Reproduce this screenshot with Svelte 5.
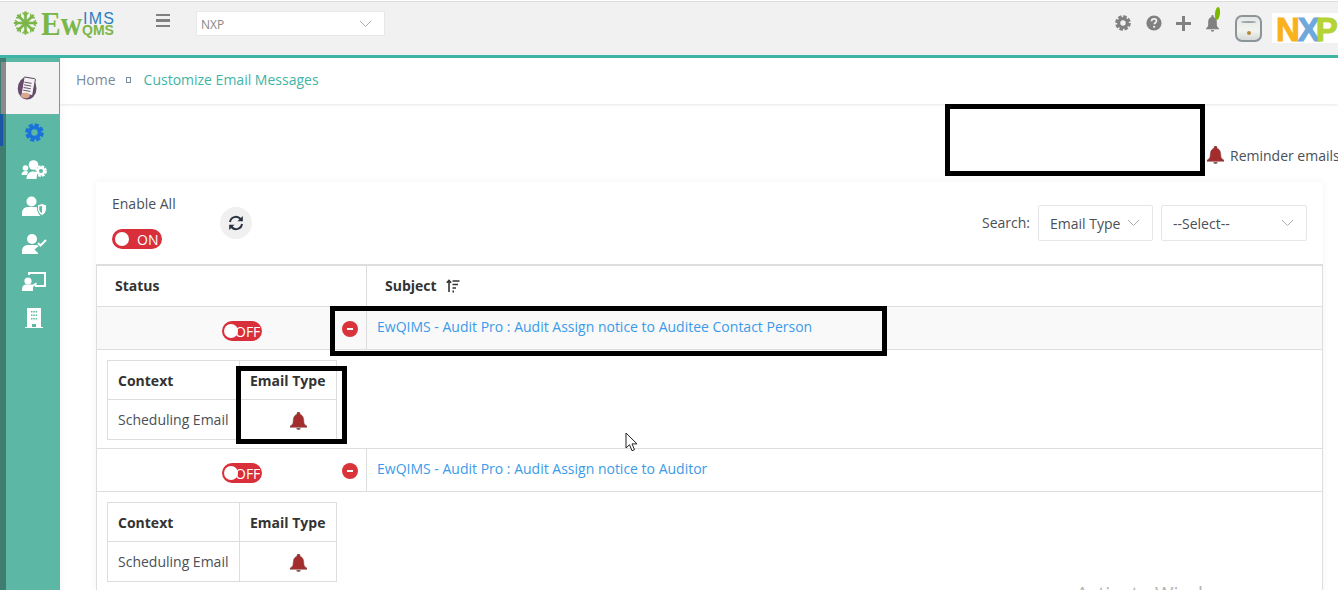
<script>
  const emails = [
    { subject: 'EwQIMS - Audit Pro : Audit Assign notice to Auditee Contact Person', context: 'Scheduling Email', shaded: true },
    { subject: 'EwQIMS - Audit Pro : Audit Assign notice to Auditor', context: 'Scheduling Email', shaded: false }
  ];

  const spokes = [0, 45, 90, 135, 180, 225, 270, 315];
</script>

{#snippet bell(size)}
  <svg class="bell" width={size} height={size * 1.08} viewBox="1 0 14 18" preserveAspectRatio="none">
    <path d="M8 0a1.200 1.200 0 0 1 1.200 1.200v1.100c1.800.7 2.800 2.400 3 4.700l.3 3.600c.1 1.500 1.300 2.500 2.500 3.400v1H1v-1c1.200-.9 2.400-1.900 2.500-3.400L3.800 7c.2-2.300 1.200-4 3-4.700V1.200A1.200 1.200 0 0 1 8 0z" fill="#a52c2c" stroke="#7d4a4a" stroke-width=".5" />
    <path d="M6.200 15.800h3.600a1.800 1.800 0 0 1-3.600 0z" fill="#8d5a5a" />
  </svg>
{/snippet}

{#snippet gear(size, color)}
  <svg width={size} height={size} viewBox="0 0 20 20">
    <circle cx="10" cy="10" r="5.4" fill="none" stroke={color} stroke-width="4" />
    <circle cx="10" cy="10" r="8.2" fill="none" stroke={color} stroke-width="3.2" stroke-dasharray="4.4 2.04" />
  </svg>
{/snippet}

{#snippet chevron()}
  <svg class="chevron" width="13" height="8" viewBox="0 0 13 8">
    <path d="M1 1l5.5 5.5L12 1" fill="none" stroke="#a9adb5" stroke-width="1" />
  </svg>
{/snippet}

<div class="page">
  <header class="topbar">
    <svg class="logo" width="104" height="34" viewBox="0 0 104 34">
      <g transform="translate(12.500 12)" stroke="#7ab648" stroke-width="2.600" stroke-linecap="round">
        {#each spokes as a}
          <g transform="rotate({a})">
            <line x1="0" y1="-1" x2="0" y2="-10.500" />
            <line x1="0" y1="-7.500" x2="2.600" y2="-10" stroke-width="1.400" />
            <line x1="0" y1="-7.500" x2="-2.600" y2="-10" stroke-width="1.400" />
          </g>
        {/each}
      </g>
      <text x="28" y="24" class="logo-ew" textLength="41" lengthAdjust="spacingAndGlyphs">Ew</text>
      <text x="70" y="13" class="logo-ims" textLength="31">IMS</text>
      <text x="69" y="24" class="logo-qms">QMS</text>
    </svg>

    <button class="menu" aria-label="Menu"><i></i><i></i><i></i></button>

    <div class="org-select">
      <span>NXP</span>
      {@render chevron()}
    </div>

    <div class="top-icons">
      {@render gear(16, '#808080')}
      <svg class="help" width="16" height="16" viewBox="0 0 16 16">
        <circle cx="8" cy="8" r="7.6" fill="#808080" />
        <path d="M5.600 6.200c0-1.400 1.100-2.300 2.500-2.300s2.400.9 2.400 2.100c0 1.700-2.200 1.700-2.200 3.300" fill="none" stroke="#f1f1f1" stroke-width="1.700" />
        <circle cx="8.200" cy="11.800" r="1.100" fill="#f1f1f1" />
      </svg>
      <svg width="15" height="15" viewBox="0 0 15 15">
        <path d="M7.500 0v15M0 7.500h15" stroke="#808080" stroke-width="3" />
      </svg>
      <span class="notify">
        <svg width="15" height="17" viewBox="0 0 16 18">
          <path d="M8 0a1.200 1.200 0 0 1 1.200 1.200v.9c2.200.6 3.400 2.600 3.400 4.900v3.600c0 1.500 1.100 2.600 2.400 3.600v1H1v-1c1.300-1 2.400-2.100 2.400-3.600V7c0-2.300 1.200-4.300 3.400-4.900v-.9A1.200 1.200 0 0 1 8 0z" fill="#808080" />
          <path d="M6.200 16h3.600a1.800 1.800 0 0 1-3.600 0z" fill="#808080" />
        </svg>
        <b class="pill"></b>
      </span>
      <span class="avatar"><i></i></span>
      <span class="brand"><b class="n">N</b><b class="x">X</b><b class="p">P</b></span>
    </div>
  </header>

  <div class="body">
    <nav class="sidebar">
      <div class="nav-head">
        <svg width="22" height="25" viewBox="0 0 24 28">
          <ellipse cx="11" cy="15" rx="10.500" ry="12.500" fill="#6a4a6e" />
          <rect x="6" y="3" width="13" height="19" rx="1" transform="rotate(10 12 12)" fill="#f4f1f4" stroke="#57405c" />
          <path d="M8 8l8 1.400M7.600 11l8 1.400M7.100 14l8 1.400M6.600 17l8 1.400" stroke="#57405c" stroke-width="1" />
          <ellipse cx="9" cy="23" rx="5" ry="3" fill="#d9a78b" />
        </svg>
      </div>
      <div class="nav-item active">{@render gear(19, '#1a73d9')}</div>
      <div class="nav-item">
        <svg width="26" height="20" viewBox="0 0 26 20" fill="#fff">
          <circle cx="4.500" cy="8" r="2.800" /><path d="M.5 15c0-2.600 1.800-4 4-4 1 0 2 .2 2.500.6L6 15z" />
          <circle cx="12.500" cy="5" r="4.800" /><path d="M5.500 19c0-5 3-7.500 7-7.500 1.500 0 2.800.4 3.800 1L15.500 19z" />
        </svg>
        <span class="nav-gear">{@render gear(12, '#fff')}</span>
      </div>
      <div class="nav-item">
        <svg width="25" height="21" viewBox="0 0 25 21" fill="#fff">
          <circle cx="9.500" cy="5.500" r="5" /><path d="M0 20v-3c0-4 3-6 6-6h8c1 0 1.500.2 2 .5v2.500c0 2 .8 4.500 2.500 6z" />
          <path d="M20 7.500l4.500 1.500v3.800c0 3-2 5.700-4.500 6.700-2.500-1-4.500-3.700-4.500-6.700V9z" stroke="#5cb8a5" /><path d="M20 10v7.200c-1.500-.8-2.800-2.400-2.800-4.400v-2.300z" fill="#5cb8a5" />
        </svg>
      </div>
      <div class="nav-item">
        <svg width="25" height="20" viewBox="0 0 25 20" fill="#fff">
          <circle cx="10" cy="5" r="5" /><path d="M0 20v-3c0-4 3-6 6-6h8c1 0 2 .3 2.800 1L12.500 15.500 16 19v1z" />
          <path d="M16 9l2.500 2.500L24 6" fill="none" stroke="#fff" stroke-width="2" />
        </svg>
      </div>
      <div class="nav-item">
        <svg width="25" height="20" viewBox="0 0 25 20" fill="#fff">
          <path d="M6 4V1h18v15H13v-2h9V3H8v1z" /><circle cx="6" cy="10" r="3.600" /><path d="M0 20v-2c0-3 2-4.500 4-4.500h7l3-2 1 1.500-4 3v4z" />
        </svg>
      </div>
      <div class="nav-item">
        <svg width="18" height="20" viewBox="0 0 18 20">
          <path d="M0 19h18v1H0zM2 0h14v19h-5v-3H7v3H2z" fill="#fff" />
          <path d="M6 3h1.500v1.500H6zM8.300 3h1.500v1.500H8.300zM10.600 3h1.500v1.500h-1.500zM6 6.500h1.500V8H6zM8.300 6.500h1.500V8H8.300zM10.600 6.500h1.500V8h-1.500zM6 10h1.500v1.500H6zM8.300 10h1.500v1.500H8.300zM10.600 10h1.500v1.500h-1.500z" fill="#5cb8a5" />
        </svg>
      </div>
    </nav>

    <main class="main">
      <div class="crumbs">
        <span>Home</span>
        <i class="crumb-sep"></i>
        <span class="crumb-current">Customize Email Messages</span>
      </div>

      <div class="legend">
        {@render bell(17)}
        <span>Reminder emails</span>
      </div>

      <section class="card">
        <div class="toolbar">
          <div class="enable-all">
            <span>Enable All</span>
            <span class="switch on"><i></i>ON</span>
          </div>
          <button class="refresh" aria-label="Refresh">
            <svg width="16" height="16" viewBox="0 0 16 16" fill="none" stroke="#2b3340" stroke-width="2">
              <path d="M2 7a6 6 0 0 1 10.500-3L14 5.500" />
              <path d="M14.800 1v5.300H9.500z" fill="#2b3340" stroke="none" />
              <path d="M14 9a6 6 0 0 1-10.500 3L2 10.500" />
              <path d="M1.200 15V9.700h5.300z" fill="#2b3340" stroke="none" />
            </svg>
          </button>
          <div class="search">
            <span class="search-label">Search:</span>
            <div class="select type-select"><span>Email Type</span>{@render chevron()}</div>
            <div class="select value-select"><span>--Select--</span>{@render chevron()}</div>
          </div>
        </div>

        <table class="emails">
          <colgroup><col class="status-col" /><col /></colgroup>
          <thead>
            <tr>
              <th>Status</th>
              <th class="subject-head">
                Subject
                <svg width="14" height="14" viewBox="0 0 14 14" stroke="#333" stroke-width="1.600" fill="none">
                  <path d="M3 13V1.500M.8 3.700L3 1.500l2.200 2.200M6.500 2h7M6.500 5.500h5.500M6.500 9h3.500" />
                  <path d="M6.500 12.500h1.500" stroke-width="2" />
                </svg>
              </th>
            </tr>
          </thead>
          <tbody>
            {#each emails as email}
              <tr class="email-row" class:shaded={email.shaded}>
                <td>
                  <div class="status-cell">
                    <span class="switch off"><i></i>OFF</span>
                    <span class="collapse"></span>
                  </div>
                </td>
                <td class="subject"><a href="#top">{email.subject}</a></td>
              </tr>
              <tr class="detail-row">
                <td colspan="2">
                  <table class="detail">
                    <thead>
                      <tr><th class="context-col">Context</th><th class="type-col">Email Type</th></tr>
                    </thead>
                    <tbody>
                      <tr>
                        <td>{email.context}</td>
                        <td class="bell-cell">{@render bell(17)}</td>
                      </tr>
                    </tbody>
                  </table>
                </td>
              </tr>
            {/each}
          </tbody>
        </table>
      </section>
    </main>
  </div>

  <!-- redaction boxes drawn over the capture -->
  <div class="mark mark-legend"></div>
  <div class="mark mark-subject"></div>
  <div class="mark mark-type"></div>

  <svg class="cursor" width="14" height="20" viewBox="0 0 14 20">
    <path d="M1 1v15l3.500-3.300 2.500 6 2.500-1-2.500-5.800h5z" fill="#fff" stroke="#222" stroke-width="1" />
  </svg>

  <span class="watermark">Activate Windows</span>
</div>

<style>
  :global(body) {
    margin: 0;
    overflow: hidden;
  }

  .page {
    position: relative;
    height: 590px;
    overflow: hidden;
    font-family: "Open Sans", sans-serif;
    font-size: 14px;
    color: #495057;
    background: #fff;
  }

  /* top bar */
  .topbar {
    display: flex;
    align-items: center;
    box-sizing: border-box;
    height: 57px;
    padding: 2px 0 3px 13px;
    background: #f1f1f1;
    border-top: 1px solid #ddd;
    border-bottom: 3px solid #3fb5a5;
    margin-top: 1px;
  }

  .logo {
    flex: none;
    margin-top: -1px;
  }

  .logo-ew {
    font-family: "Liberation Serif", serif;
    font-weight: 700;
    font-size: 34px;
    fill: #7ab648;
  }

  .logo-ims {
    font-family: "Liberation Sans", sans-serif;
    font-size: 16px;
    fill: #2f7fc1;
  }

  .logo-qms {
    font-family: "Liberation Sans", sans-serif;
    font-weight: 700;
    font-size: 14px;
    fill: #7ab648;
  }

  .menu {
    display: flex;
    flex-direction: column;
    gap: 3px;
    width: 14px;
    margin: -15px 0 0 39px;
    padding: 0;
    border: 0;
    background: none;
  }

  .menu i {
    height: 2.5px;
    background: #808080;
  }

  .org-select {
    display: flex;
    align-items: center;
    justify-content: space-between;
    box-sizing: border-box;
    width: 189px;
    height: 25px;
    margin: -9px 0 0 26px;
    padding: 1px 12px 0 4px;
    background: #fff;
    border: 1px solid #e8e8e8;
    font-size: 12px;
    color: #888;
  }

  .top-icons {
    display: flex;
    align-items: center;
    gap: 15px;
    margin-left: auto;
  }

  .top-icons > svg,
  .notify {
    margin-bottom: 10px;
  }

  .top-icons > .help {
    margin-right: -1px;
  }

  .notify {
    position: relative;
    display: flex;
    margin-left: -1px;
  }

  .pill {
    position: absolute;
    top: -8px;
    left: 10px;
    width: 5px;
    height: 13px;
    border-radius: 50%;
    background: #7ab800;
    transform: rotate(6deg);
  }

  .avatar {
    position: relative;
    box-sizing: border-box;
    width: 27px;
    height: 27px;
    border-radius: 7px;
    border: 2px solid #8b9499;
    background: linear-gradient(#e4e7e6, #f2f3ef 60%, #d5d9d8);
  }

  .avatar::before {
    content: "";
    position: absolute;
    left: 4px;
    right: 4px;
    top: 4px;
    height: 2px;
    border-radius: 50%;
    background: #9aa2a5;
  }

  .avatar i {
    position: absolute;
    left: 10px;
    top: 14px;
    width: 4px;
    height: 4px;
    border-radius: 50%;
    background: #b58a3c;
  }

  .brand {
    display: flex;
    box-sizing: border-box;
    width: 66px;
    height: 30px;
    margin-left: -5px;
    padding: 2px 0 0 4px;
    overflow: hidden;
    background: #fff;
    font-family: "Liberation Sans", sans-serif;
    font-size: 33px;
    line-height: 30px;
    -webkit-text-stroke: 1px currentColor;
  }

  .n { color: #f9b21b; }
  .x { color: #6fa8dc; margin-left: -2px; }
  .p { color: #b5d334; margin-left: -4px; }

  .body {
    display: flex;
  }

  /* sidebar */
  .sidebar {
    flex: none;
    box-sizing: border-box;
    width: 60px;
    height: 532px;
    padding-top: 4px;
    background: #5cb8a5;
    border-left: 6px solid #3e7d70;
  }

  .nav-head {
    position: relative;
    box-sizing: border-box;
    height: 52px;
    padding: 13px 0 0 11px;
    background: #f3f3f3;
    border-right: 1px solid #3fb5a5;
  }

  .nav-head::before {
    content: "";
    position: absolute;
    left: -5px;
    top: 0;
    bottom: 0;
    width: 5px;
    background: #8a8a8a;
  }

  .nav-item {
    position: relative;
    display: flex;
    align-items: center;
    justify-content: center;
    height: 37px;
    padding-left: 2px;
  }

  .nav-item.active::before {
    content: "";
    position: absolute;
    left: -6px;
    top: 0;
    width: 3px;
    height: 32px;
    background: #1a56a8;
  }

  .nav-gear {
    position: absolute;
    left: 29px;
    top: 14px;
    display: flex;
  }

  /* main column */
  .main {
    flex: 1;
    min-width: 0;
    box-shadow: inset 8px 0 8px -8px rgba(0, 0, 0, 0.05);
  }

  .crumbs {
    display: flex;
    align-items: center;
    box-sizing: border-box;
    height: 46px;
    padding: 0 0 4px 16px;
    color: #7a8a99;
    box-shadow: 0 1px 3px rgba(0, 0, 0, 0.1);
  }

  .crumb-sep {
    box-sizing: border-box;
    width: 5px;
    height: 6px;
    margin: 2px 13px 0 10px;
    border: 1px solid #7a8a99;
  }

  .crumb-current {
    color: #3fb5a5;
  }

  .legend {
    display: flex;
    align-items: center;
    gap: 6px;
    height: 78px;
    padding: 24px 0 0 1147px;
    box-sizing: border-box;
    white-space: nowrap;
  }

  .legend .bell {
    flex: none;
  }

  .card {
    margin: 0 15px 0 36px;
    background: #fff;
    box-shadow: 0 0 8px rgba(0, 0, 0, 0.05);
  }

  .toolbar {
    display: flex;
    height: 82px;
  }

  .enable-all {
    display: flex;
    flex-direction: column;
    align-items: flex-start;
    gap: 16px;
    padding: 12px 0 0 16px;
  }

  .refresh {
    display: flex;
    align-items: center;
    justify-content: center;
    width: 32px;
    height: 32px;
    margin: 25px 0 0 44px;
    padding: 0;
    border: 0;
    border-radius: 50%;
    background: #f0f0f0;
  }

  .search {
    display: flex;
    gap: 8px;
    margin: 23px 16px 0 auto;
  }

  .search-label {
    line-height: 36px;
  }

  .select {
    display: flex;
    align-items: center;
    justify-content: space-between;
    box-sizing: border-box;
    height: 36px;
    padding: 0 12px 0 11px;
    border: 1px solid #e4e6ea;
    border-radius: 2px;
  }

  .type-select { width: 115px; }
  .value-select { width: 146px; }

  .switch {
    position: relative;
    display: flex;
    align-items: center;
    box-sizing: border-box;
    height: 20px;
    border-radius: 10px;
    background: #d92f3a;
    color: #fff;
    white-space: nowrap;
  }

  .switch.on {
    width: 50px;
    padding-left: 25px;
  }

  .switch.off {
    width: 40px;
    padding-left: 13px;
  }

  .switch i {
    position: absolute;
    left: 3px;
    top: 3px;
    width: 14px;
    height: 14px;
    border-radius: 50%;
    background: #fff;
  }

  .switch.off i {
    left: 2px;
  }

  /* main table */
  .emails {
    width: 100%;
    border-collapse: collapse;
    table-layout: fixed;
    border-top: 2px solid #ddd;
  }

  .status-col {
    width: 270px;
  }

  .emails > thead th {
    height: 41px;
    padding: 0 0 0 18px;
    box-sizing: border-box;
    text-align: left;
    font-weight: 700;
    color: #333;
    border: 1px solid #ddd;
    border-top: 0;
  }

  .subject-head svg {
    margin-left: 6px;
    vertical-align: -2px;
  }

  .email-row > td {
    height: 42px;
    padding: 0;
    border: 1px solid #ddd;
  }

  .email-row.shaded > td {
    background: #f9f9f9;
  }

  .status-cell {
    display: flex;
    align-items: center;
    padding: 7px 8px 0 125px;
  }

  .collapse {
    position: relative;
    width: 16px;
    height: 16px;
    margin: -4px 0 0 auto;
    border-radius: 50%;
    background: #d9343a;
  }

  .collapse::after {
    content: "";
    position: absolute;
    left: 5px;
    top: 7px;
    width: 6px;
    height: 1.5px;
    background: #fff;
  }

  .email-row > td.subject {
    height: 40px;
    padding: 0 0 2px 10px;
    vertical-align: middle;
  }

  .subject a {
    color: #3b9be8;
    text-decoration: none;
  }

  .detail-row > td {
    padding: 10px 10px 8px;
    border: 1px solid #ddd;
  }

  /* nested table */
  .detail {
    border-collapse: collapse;
    table-layout: fixed;
    width: 229px;
  }

  .detail th,
  .detail td {
    height: 39px;
    padding: 0 10px;
    border: 1px solid #ddd;
    text-align: left;
    white-space: nowrap;
  }

  .detail th {
    padding-top: 2px;
    color: #333;
    font-weight: 700;
  }

  .context-col { width: 132px; box-sizing: border-box; }
  .type-col { width: 97px; box-sizing: border-box; }

  .detail td.bell-cell {
    height: 34px;
    text-align: center;
    padding: 5px 0 0 20px;
    line-height: 0;
  }

  /* overlays */
  .mark {
    position: absolute;
    box-sizing: border-box;
    border: 5px solid #000;
    pointer-events: none;
  }

  .mark-legend {
    left: 945px;
    top: 104px;
    width: 260px;
    height: 72px;
    background: #fff;
  }

  .mark-subject {
    left: 330px;
    top: 306px;
    width: 557px;
    height: 50px;
  }

  .mark-type {
    left: 236px;
    top: 366px;
    width: 111px;
    height: 78px;
  }

  .cursor {
    position: absolute;
    left: 625px;
    top: 432px;
  }

  .watermark {
    position: absolute;
    left: 1076px;
    top: 580px;
    font-size: 20px;
    color: #b5b5b5;
    white-space: nowrap;
  }
</style>
